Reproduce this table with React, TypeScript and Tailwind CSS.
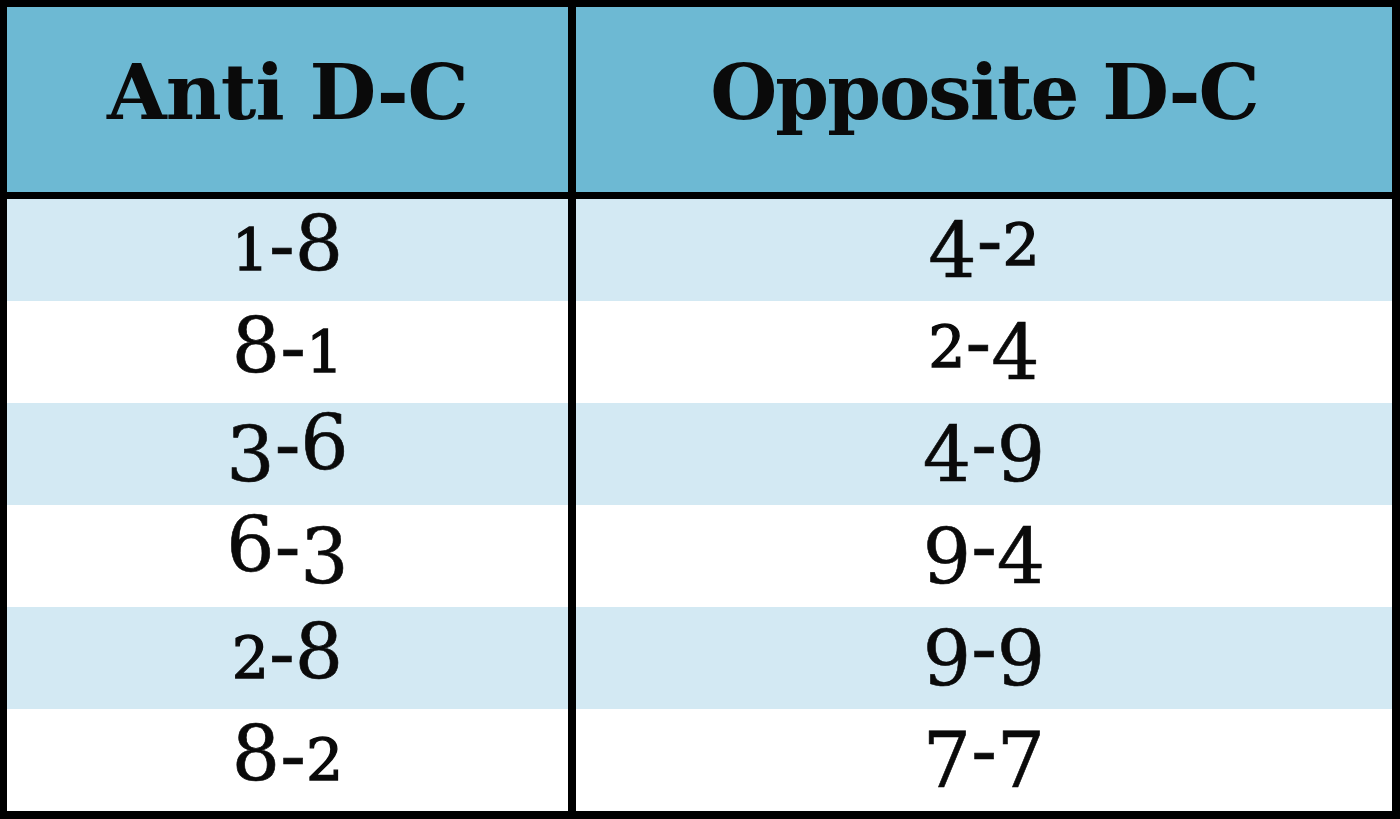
const rows = [
  ["1-8", "4-2"],
  ["8-1", "2-4"],
  ["3-6", "4-9"],
  ["6-3", "9-4"],
  ["2-8", "9-9"],
  ["8-2", "7-7"],
];

// fake old-style figures: small digits sit on x-height, others drop below the baseline
function OldStyle({ value }: { value: string }) {
  return (
    <span className="[-webkit-text-stroke:0.6px_#0a0a0a]">
      {value.split("").map((ch, i) => {
        if (ch === "1" || ch === "2" || ch === "0") {
          return (
            <span key={i} className="text-[0.77em] [-webkit-text-stroke:1.3px_#0a0a0a]">
              {ch}
            </span>
          );
        }
        if ("34579".includes(ch)) {
          return (
            <span key={i} className="align-[-0.16em]">
              {ch}
            </span>
          );
        }
        if (ch === "-") {
          return (
            <span key={i} className="align-[-0.03em]">
              {ch}
            </span>
          );
        }
        return <span key={i}>{ch}</span>;
      })}
    </span>
  );
}

export default function App() {
  return (
    <div className="w-[1400px] h-[819px] bg-black pt-[7px] pl-[7px] pr-[8px] pb-[8px] flex flex-col font-['DejaVu_Serif','Liberation_Serif',serif] text-[#0a0a0a]">
      {/* Header */}
      <div className="grid grid-cols-[561px_816px] gap-x-[8px] h-[185px] shrink-0">
        <div className="bg-[#6db9d3] flex items-center justify-center pb-[14px]">
          <span className="text-[77px] font-bold leading-none tracking-[-1px]">Anti D-C</span>
        </div>
        <div className="bg-[#6db9d3] flex items-center justify-center pb-[14px]">
          <span className="text-[77px] font-bold leading-none tracking-[-2px]">Opposite D-C</span>
        </div>
      </div>

      {/* Body */}
      <div className="mt-[7px] grid grid-cols-[561px_816px] gap-x-[8px] grid-rows-[repeat(6,102px)]">
        {rows.map(([a, b], i) => {
          const bg = i % 2 === 0 ? "bg-[#d3e9f3]" : "bg-white";
          return [
            <div key={`a${i}`} className={`${bg} flex items-center justify-center pb-[10px]`}>
              <span className="text-[76px] leading-none">
                <OldStyle value={a} />
              </span>
            </div>,
            <div key={`b${i}`} className={`${bg} flex items-center justify-center pb-[10px]`}>
              <span className="text-[76px] leading-none">
                <OldStyle value={b} />
              </span>
            </div>,
          ];
        })}
      </div>
    </div>
  );
}
